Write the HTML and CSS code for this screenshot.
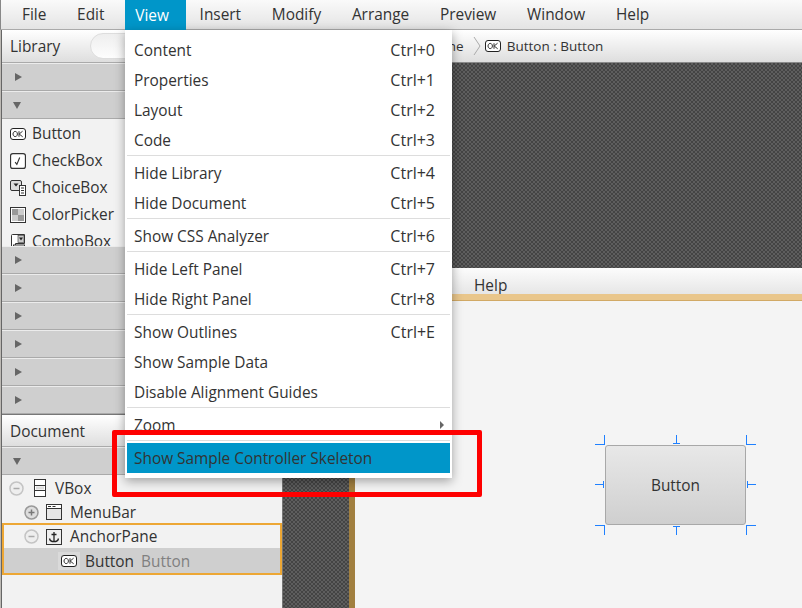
FILE: index.html
```html
<!DOCTYPE html>
<html lang="en">
<head>
<meta charset="utf-8">
<title>Scene Builder</title>
<link rel="stylesheet" href="styles.css">
</head>
<body>
<svg class="defs" width="0" height="0" aria-hidden="true">
  <symbol id="i-ok" viewBox="0 0 16 12">
    <rect x="0.5" y="0.5" width="15" height="11" rx="2.500" fill="#fff" stroke="#222"/>
    <path d="M5.200 3.400a2.200 2.600 0 1 0 .01 0M9 3.200v5.600M12.600 3.200L9.200 6l3.500 2.800" fill="none" stroke="#333" stroke-width="1"/>
  </symbol>
  <symbol id="i-check" viewBox="0 0 14 14">
    <rect x="0.5" y="0.5" width="13" height="13" rx="2" fill="#fff" stroke="#333"/>
    <path d="M4.500 8l1.500 2 2.500-6" fill="none" stroke="#333"/>
  </symbol>
  <symbol id="i-choice" viewBox="0 0 16 16">
    <rect x="0.5" y="0.5" width="11" height="10" rx="1.5" fill="#ddd" stroke="#333"/>
    <path d="M3.500 3.500h5l-2.500 3z" fill="#222"/>
    <rect x="9.500" y="5.500" width="6" height="10" fill="#fff" stroke="#333"/>
    <path d="M11 8h3M11 10.500h3M11 13h3" stroke="#333"/>
  </symbol>
  <symbol id="i-color" viewBox="0 0 16 16">
    <rect x="0.500" y="0.500" width="15" height="15" fill="#fff" stroke="#333"/>
    <rect x="2" y="2" width="6" height="6" fill="#999"/>
    <rect x="8" y="2" width="6" height="6" fill="#ccc"/>
    <rect x="2" y="8" width="6" height="6" fill="#ccc"/>
    <rect x="8" y="8" width="6" height="6" fill="#999"/>
  </symbol>
  <symbol id="i-combo" viewBox="0 0 16 16">
    <path d="M1.500 12.500V1.500a1 1 0 0 1 1-1h12v9H5.500v3z" fill="#fff" stroke="#333"/>
    <rect x="8" y="1.500" width="6" height="7" fill="#ccc" stroke="#333" stroke-width=".6"/>
    <path d="M9 3.500h4l-2 3z" fill="#222"/>
    <rect x="3.500" y="11" width="11" height="4.500" fill="#fff" stroke="#333"/>
  </symbol>
  <symbol id="i-vbox" viewBox="0 0 12 18">
    <rect x="0.500" y="0.500" width="11" height="17" fill="#fff" stroke="#333"/>
    <path d="M1 6.500h10M1 11.500h10" stroke="#333"/>
    <rect x="2" y="7.500" width="8" height="3" fill="#ddd"/>
  </symbol>
  <symbol id="i-menubar" viewBox="0 0 16 16">
    <rect x="0.500" y="0.500" width="15" height="15" fill="#e6e6e6" stroke="#333"/>
    <rect x="1" y="1" width="14" height="3" fill="#fff"/>
    <path d="M1 4.500h14" stroke="#333"/>
    <path d="M2 2.500h3M6.500 2.500h3" stroke="#333"/>
  </symbol>
  <symbol id="i-anchor" viewBox="0 0 16 16">
    <rect x="0.500" y="0.500" width="15" height="15" fill="#eee" stroke="#333"/>
    <path d="M8 3v9.500M5.500 5.500h5M3.500 9.500c.5 2.500 2.500 3.200 4.500 3.200s4-.7 4.500-3.200" fill="none" stroke="#222" stroke-width="1.300"/>
  </symbol>
  <symbol id="i-minus" viewBox="0 0 15 15">
    <circle cx="7.500" cy="7.500" r="6.500" fill="#eee" stroke="#c4c4c4" stroke-width="1.500"/>
    <path d="M4.500 7.500h6" stroke="#aaa" stroke-width="1.500"/>
  </symbol>
  <symbol id="i-plus" viewBox="0 0 15 15">
    <circle cx="7.500" cy="7.500" r="6.500" fill="#ddd" stroke="#999" stroke-width="1.500"/>
    <path d="M4.500 7.500h6M7.500 4.500v6" stroke="#777" stroke-width="1.500"/>
  </symbol>
</svg>

<header class="menubar">
  <span class="menu-title">File</span>
  <span class="menu-title">Edit</span>
  <span class="menu-title is-open">View</span>
  <span class="menu-title">Insert</span>
  <span class="menu-title">Modify</span>
  <span class="menu-title">Arrange</span>
  <span class="menu-title">Preview</span>
  <span class="menu-title">Window</span>
  <span class="menu-title">Help</span>
</header>

<main class="workspace">
  <aside class="left-panel">
    <div class="panel-head">
      <span>Library</span>
      <span class="search"></span>
    </div>
    <div class="acc-row"><span class="tri-right"></span></div>
    <div class="acc-row"><span class="tri-down"></span></div>
    <ul class="lib-list">
      <li class="lib-item"><svg class="ic-ok"><use href="#i-ok"/></svg>Button</li>
      <li class="lib-item"><svg class="ic-16"><use href="#i-check"/></svg>CheckBox</li>
      <li class="lib-item"><svg class="ic-16"><use href="#i-choice"/></svg>ChoiceBox</li>
      <li class="lib-item"><svg class="ic-16"><use href="#i-color"/></svg>ColorPicker</li>
      <li class="lib-item"><svg class="ic-16"><use href="#i-combo"/></svg>ComboBox</li>
    </ul>
    <div class="acc-row"><span class="tri-right"></span></div>
    <div class="acc-row"><span class="tri-right"></span></div>
    <div class="acc-row"><span class="tri-right"></span></div>
    <div class="acc-row"><span class="tri-right"></span></div>
    <div class="acc-row"><span class="tri-right"></span></div>
    <div class="acc-row"><span class="tri-right"></span></div>
    <div class="panel-head panel-head-doc"><span>Document</span></div>
    <div class="acc-row"><span class="tri-down"></span></div>
    <div class="tree">
      <div class="tree-row lvl-0"><svg class="exp"><use href="#i-minus"/></svg><svg class="ic-vbox"><use href="#i-vbox"/></svg>VBox</div>
      <div class="tree-row lvl-1"><svg class="exp"><use href="#i-plus"/></svg><svg class="ic-16"><use href="#i-menubar"/></svg>MenuBar</div>
      <div class="tree-parent">
        <div class="tree-row lvl-1b"><svg class="exp"><use href="#i-minus"/></svg><svg class="ic-16"><use href="#i-anchor"/></svg>AnchorPane</div>
        <div class="tree-row lvl-2"><svg class="ic-ok"><use href="#i-ok"/></svg>Button<span class="muted">Button</span></div>
      </div>
    </div>
  </aside>

  <section class="stage">
    <nav class="crumbs">
      <span>AnchorPane</span>
      <svg class="chev" width="8" height="18"><path d="M1 0l6 9-6 9" fill="none" stroke="#aaa"/></svg>
      <svg class="ic-ok"><use href="#i-ok"/></svg>
      <span>Button : Button</span>
    </nav>
    <div class="canvas">
      <div class="scene">
        <div class="scene-bar"><span>Help</span></div>
        <div class="scene-tan"></div>
        <div class="scene-body">
          <div class="sel-wrap">
            <button class="fx-button" type="button">Button</button>
            <i class="h h-tl-a"></i><i class="h h-tl-b"></i>
            <i class="h h-tc"></i>
            <i class="h h-tr-a"></i><i class="h h-tr-b"></i>
            <i class="h h-ml"></i><i class="h h-mr"></i>
            <i class="h h-bl-a"></i><i class="h h-bl-b"></i>
            <i class="h h-bc"></i>
            <i class="h h-br-a"></i><i class="h h-br-b"></i>
          </div>
        </div>
      </div>
    </div>
  </section>
</main>

<div class="dropdown">
  <div class="mi"><span>Content</span><span class="key">Ctrl+0</span></div>
  <div class="mi"><span>Properties</span><span class="key">Ctrl+1</span></div>
  <div class="mi"><span>Layout</span><span class="key">Ctrl+2</span></div>
  <div class="mi"><span>Code</span><span class="key">Ctrl+3</span></div>
  <div class="sep"></div>
  <div class="mi"><span>Hide Library</span><span class="key">Ctrl+4</span></div>
  <div class="mi"><span>Hide Document</span><span class="key">Ctrl+5</span></div>
  <div class="sep"></div>
  <div class="mi"><span>Show CSS Analyzer</span><span class="key">Ctrl+6</span></div>
  <div class="sep"></div>
  <div class="mi"><span>Hide Left Panel</span><span class="key">Ctrl+7</span></div>
  <div class="mi"><span>Hide Right Panel</span><span class="key">Ctrl+8</span></div>
  <div class="sep"></div>
  <div class="mi"><span>Show Outlines</span><span class="key">Ctrl+E</span></div>
  <div class="mi"><span>Show Sample Data</span></div>
  <div class="mi"><span>Disable Alignment Guides</span></div>
  <div class="sep"></div>
  <div class="mi"><span>Zoom</span><span class="sub-arrow"></span></div>
  <div class="sep"></div>
  <div class="mi mi-active"><span>Show Sample Controller Skeleton</span></div>
</div>

<div class="red-box"></div>
</body>
</html>
```
FILE: styles.css
```css
* { box-sizing: border-box; }
html, body { height: 100%; }
body {
  margin: 0;
  width: 802px;
  height: 608px;
  overflow: hidden;
  display: flex;
  flex-direction: column;
  background: #f4f4f4;
  font-family: "Open Sans", "Noto Sans", "Liberation Sans", sans-serif;
  font-size: 15.400px;
  color: #333;
  position: relative;
}
.defs { position: absolute; }
svg { display: block; flex: none; }

/* top menu */
.menubar {
  height: 30px;
  flex: none;
  display: flex;
  gap: 4px;
  padding-left: 11px;
  background: linear-gradient(#fafafa, #e4e4e4);
  border-bottom: 1px solid #aaa;
  border-left: 1px solid #888;
}
.menu-title {
  display: flex;
  align-items: center;
  padding: 0 16.750px 0 10px;
  height: 29px;
}
.is-open { background: #0096c9; color: #fff; height: 30px; }

.workspace { flex: 1; display: flex; min-height: 0; background: #bdbab5; }

/* left column */
.left-panel {
  width: 281px;
  flex: none;
  display: flex;
  flex-direction: column;
  margin-left: 1px;
  border-left: 1px solid #666;
  background: #f2f2f2;
}
.panel-head {
  height: 33px;
  flex: none;
  display: flex;
  align-items: center;
  padding: 1px 0 0 8px;
  gap: 30px;
  background: linear-gradient(#fff, #dedede);
  border-bottom: 1px solid #aaa;
}
.panel-head-doc { border-top: 1px solid #777; }
.search {
  width: 160px;
  height: 26px;
  margin-top: -1px;
  border-radius: 13px;
  background: linear-gradient(#eee, #fdfdfd);
  border: 1px solid #ddd;
}
.acc-row {
  height: 28px;
  flex: none;
  display: flex;
  align-items: center;
  padding-left: 13px;
  background: #cfcfcf;
  border-bottom: 1px solid #aaa;
  border-top: 1px solid #ececec;
}
.tri-right {
  width: 0; height: 0;
  border-left: 7px solid #666;
  border-top: 4px solid transparent;
  border-bottom: 4px solid transparent;
}
.tri-down {
  width: 0; height: 0;
  margin-left: -2px;
  border-top: 7px solid #666;
  border-left: 4px solid transparent;
  border-right: 4px solid transparent;
}
.lib-list {
  list-style: none;
  margin: 0;
  padding: 1px 0 0;
  height: 127px;
  flex: none;
  overflow: hidden;
  background: #f2f2f2;
}
.lib-item {
  height: 27px;
  display: flex;
  align-items: center;
  gap: 6px;
  padding-left: 8px;
}
.ic-ok { width: 16px; height: 12px; }
.ic-16 { width: 16px; height: 16px; }
.ic-vbox { width: 12px; height: 18px; margin-right: -1px; }
.exp { width: 15px; height: 15px; }

/* document tree */
.tree { flex: 1; background: #f2f2f2; padding-top: 1px; }
.tree-row {
  height: 24px;
  display: flex;
  align-items: center;
}
.tree .ic-16 { margin-right: 1px; }
.lvl-0 { padding-left: 7px; gap: 10px; }
.lvl-1 { padding-left: 22px; gap: 7px; }
.lvl-1b { padding-left: 20px; gap: 7px; height: 23px; }
.tree-parent {
  border: 2px solid #eda735;
  height: 52px;
  margin-top: -1px;
}
.lvl-2 {
  height: 25px;
  background: #cfcfcf;
  padding: 1px 0 0 57px;
  gap: 8px;
}
.lvl-2 .ic-ok { box-shadow: 0 0 0 3px #dadada; }
.muted { color: #808080; margin-left: -1px; }

/* right side */
.stage {
  flex: 1;
  min-width: 0;
  display: flex;
  flex-direction: column;
}
.crumbs {
  height: 33px;
  flex: none;
  display: flex;
  align-items: center;
  gap: 6px;
  padding-left: 105px;
  font-size: 13.500px;
  background: linear-gradient(#fff, #dedede);
  border-bottom: 1px solid #8a8a8a;
}
.crumbs .chev { margin: 0 -2px 0 3px; }
.canvas {
  flex: 1;
  min-height: 0;
  padding: 205px 0 0 66px;
  border-left: 1px solid #777;
  background-color: #4e4e4e;
  background-image: repeating-conic-gradient(#444 0 25%, #5e5e5e 0 50%);
  background-size: 4px 4px;
}
.scene {
  height: 100%;
  display: flex;
  flex-direction: column;
  border-left: 6px solid #a17f3f;
  background: #f4f4f4;
}
.scene-bar {
  height: 26px;
  flex: none;
  padding-left: 119px;
  display: flex;
  align-items: center;
  padding-top: 8px;
  background: linear-gradient(#fcfcfc, #e6e6e6);
}
.scene-tan {
  height: 7px;
  flex: none;
  background: #e9c68b;
  border-bottom: 1px solid #d1a965;
}
.scene-body { flex: 1; padding: 144px 0 0 250px; }
.sel-wrap { position: relative; width: 141px; height: 80px; }
.fx-button {
  width: 100%;
  height: 100%;
  font: inherit;
  color: #333;
  border: 1px solid #a8a8a8;
  border-radius: 3px;
  background: linear-gradient(#e8e8e8, #cfcfcf);
  padding: 0;
}
/* selection handles */
.h { position: absolute; background: #1f80ff; display: block; }
.h::after { content: ""; position: absolute; background: #1f80ff; }
.h-tl-a { left: -10px; top: -1px; width: 10px; height: 1px; }
.h-tl-b { left: -1px; top: -10px; width: 1px; height: 10px; }
.h-tc { left: 71px; top: -10px; width: 1px; height: 9px; }
.h-tc::after { left: -3px; bottom: 0; width: 7px; height: 1px; }
.h-tr-a { right: -10px; top: -1px; width: 10px; height: 1px; }
.h-tr-b { right: -1px; top: -10px; width: 1px; height: 10px; }
.h-ml { left: -10px; top: 39px; width: 9px; height: 1px; }
.h-ml::after { right: 0; top: -3px; width: 1px; height: 7px; }
.h-mr { right: -10px; top: 39px; width: 9px; height: 1px; }
.h-mr::after { left: 0; top: -3px; width: 1px; height: 7px; }
.h-bl-a { left: -10px; bottom: -1px; width: 10px; height: 1px; }
.h-bl-b { left: -1px; bottom: -10px; width: 1px; height: 10px; }
.h-bc { left: 71px; bottom: -10px; width: 1px; height: 9px; }
.h-bc::after { left: -3px; top: 0; width: 7px; height: 1px; }
.h-br-a { right: -10px; bottom: -1px; width: 10px; height: 1px; }
.h-br-b { right: -1px; bottom: -10px; width: 1px; height: 10px; }

/* open menu */
.dropdown {
  position: absolute;
  left: 125px;
  top: 30px;
  width: 327px;
  padding: 5px 2px;
  background: #fff;
  box-shadow: 0 3px 10px rgba(0, 0, 0, .35);
}
.mi {
  height: 30px;
  display: flex;
  align-items: center;
  justify-content: space-between;
  padding: 0 15px 0 7px;
}
.key { font-size: 16px; }
.sep { height: 3px; border-top: 1px solid #ddd; }
.mi-active { background: #0096c9; }
.sub-arrow {
  width: 0; height: 0;
  margin-right: -9px;
  border-left: 4px solid #666;
  border-top: 4px solid transparent;
  border-bottom: 4px solid transparent;
}

/* annotation */
.red-box {
  position: absolute;
  left: 112px;
  top: 430px;
  width: 370px;
  height: 67px;
  border: 5px solid #fe0000;
  border-radius: 2px;
}
```
